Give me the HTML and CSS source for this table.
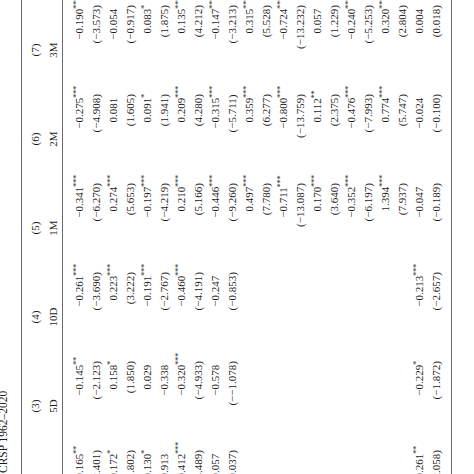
FILE: index.html
```html
<!DOCTYPE html>
<html>
<head>
<meta charset="utf-8">
<link rel="stylesheet" href="styles.css">
</head>
<body>
<div class="page">
  <div class="title">CRSP 1962–2020</div>
  <div class="tbl">
    <div class="hdr">
      <div class="row hrow"><div class="hc">(2)</div><div class="hc">(3)</div><div class="hc">(4)</div><div class="hc">(5)</div><div class="hc">(6)</div><div class="hc">(7)</div></div>
      <div class="row hrow"><div class="hc">1D</div><div class="hc">5D</div><div class="hc">10D</div><div class="hc">1M</div><div class="hc">2M</div><div class="hc">3M</div></div>
    </div>
    <div class="body">
      <div class="row">
        <div class="c"><span class="n">−0</span><span class="d">.165<sup>**</sup></span></div>
        <div class="c"><span class="n">−0</span><span class="d">.145<sup>**</sup></span></div>
        <div class="c"><span class="n">−0</span><span class="d">.261<sup>***</sup></span></div>
        <div class="c"><span class="n">−0</span><span class="d">.341<sup>***</sup></span></div>
        <div class="c"><span class="n">−0</span><span class="d">.275<sup>***</sup></span></div>
        <div class="c"><span class="n">−0</span><span class="d">.190<sup>***</sup></span></div>
      </div>
      <div class="row">
        <div class="c"><span class="n">(−2</span><span class="d">.401)</span></div>
        <div class="c"><span class="n">(−2</span><span class="d">.123)</span></div>
        <div class="c"><span class="n">(−3</span><span class="d">.690)</span></div>
        <div class="c"><span class="n">(−6</span><span class="d">.270)</span></div>
        <div class="c"><span class="n">(−4</span><span class="d">.908)</span></div>
        <div class="c"><span class="n">(−3</span><span class="d">.573)</span></div>
      </div>
      <div class="row">
        <div class="c"><span class="n">0</span><span class="d">.172<sup>*</sup></span></div>
        <div class="c"><span class="n">0</span><span class="d">.158<sup>*</sup></span></div>
        <div class="c"><span class="n">0</span><span class="d">.223<sup>***</sup></span></div>
        <div class="c"><span class="n">0</span><span class="d">.274<sup>***</sup></span></div>
        <div class="c"><span class="n">0</span><span class="d">.081</span></div>
        <div class="c"><span class="n">−0</span><span class="d">.054</span></div>
      </div>
      <div class="row">
        <div class="c"><span class="n">(1</span><span class="d">.802)</span></div>
        <div class="c"><span class="n">(1</span><span class="d">.850)</span></div>
        <div class="c"><span class="n">(3</span><span class="d">.222)</span></div>
        <div class="c"><span class="n">(5</span><span class="d">.653)</span></div>
        <div class="c"><span class="n">(1</span><span class="d">.605)</span></div>
        <div class="c"><span class="n">(−0</span><span class="d">.917)</span></div>
      </div>
      <div class="row">
        <div class="c"><span class="n">0</span><span class="d">.130<sup>*</sup></span></div>
        <div class="c"><span class="n">0</span><span class="d">.029</span></div>
        <div class="c"><span class="n">−0</span><span class="d">.191<sup>***</sup></span></div>
        <div class="c"><span class="n">−0</span><span class="d">.197<sup>***</sup></span></div>
        <div class="c"><span class="n">0</span><span class="d">.091<sup>*</sup></span></div>
        <div class="c"><span class="n">0</span><span class="d">.083<sup>*</sup></span></div>
      </div>
      <div class="row">
        <div class="c"><span class="n">−0</span><span class="d">.913</span></div>
        <div class="c"><span class="n">−0</span><span class="d">.338</span></div>
        <div class="c"><span class="n">(−2</span><span class="d">.767)</span></div>
        <div class="c"><span class="n">(−4</span><span class="d">.219)</span></div>
        <div class="c"><span class="n">(1</span><span class="d">.941)</span></div>
        <div class="c"><span class="n">(1</span><span class="d">.875)</span></div>
      </div>
      <div class="row">
        <div class="c"><span class="n">−0</span><span class="d">.412<sup>***</sup></span></div>
        <div class="c"><span class="n">−0</span><span class="d">.320<sup>***</sup></span></div>
        <div class="c"><span class="n">−0</span><span class="d">.460<sup>***</sup></span></div>
        <div class="c"><span class="n">0</span><span class="d">.210<sup>***</sup></span></div>
        <div class="c"><span class="n">0</span><span class="d">.209<sup>***</sup></span></div>
        <div class="c"><span class="n">0</span><span class="d">.135<sup>***</sup></span></div>
      </div>
      <div class="row">
        <div class="c"><span class="n">(−4</span><span class="d">.489)</span></div>
        <div class="c"><span class="n">(−4</span><span class="d">.933)</span></div>
        <div class="c"><span class="n">(−4</span><span class="d">.191)</span></div>
        <div class="c"><span class="n">(5</span><span class="d">.166)</span></div>
        <div class="c"><span class="n">(4</span><span class="d">.280)</span></div>
        <div class="c"><span class="n">(4</span><span class="d">.212)</span></div>
      </div>
      <div class="row">
        <div class="c"><span class="n">−0</span><span class="d">.057</span></div>
        <div class="c"><span class="n">−0</span><span class="d">.578</span></div>
        <div class="c"><span class="n">−0</span><span class="d">.247</span></div>
        <div class="c"><span class="n">−0</span><span class="d">.446<sup>***</sup></span></div>
        <div class="c"><span class="n">−0</span><span class="d">.315<sup>***</sup></span></div>
        <div class="c"><span class="n">−0</span><span class="d">.147<sup>***</sup></span></div>
      </div>
      <div class="row">
        <div class="c"><span class="n">(−0</span><span class="d">.037)</span></div>
        <div class="c"><span class="n">(−−1</span><span class="d">.078)</span></div>
        <div class="c"><span class="n">(−0</span><span class="d">.853)</span></div>
        <div class="c"><span class="n">(−9</span><span class="d">.260)</span></div>
        <div class="c"><span class="n">(−5</span><span class="d">.711)</span></div>
        <div class="c"><span class="n">(−3</span><span class="d">.213)</span></div>
      </div>
      <div class="row">
        <div class="c"></div><div class="c"></div><div class="c"></div>
        <div class="c"><span class="n">0</span><span class="d">.497<sup>***</sup></span></div>
        <div class="c"><span class="n">0</span><span class="d">.359<sup>***</sup></span></div>
        <div class="c"><span class="n">0</span><span class="d">.315<sup>***</sup></span></div>
      </div>
      <div class="row">
        <div class="c"></div><div class="c"></div><div class="c"></div>
        <div class="c"><span class="n">(7</span><span class="d">.780)</span></div>
        <div class="c"><span class="n">(6</span><span class="d">.277)</span></div>
        <div class="c"><span class="n">(5</span><span class="d">.528)</span></div>
      </div>
      <div class="row">
        <div class="c"></div><div class="c"></div><div class="c"></div>
        <div class="c"><span class="n">−0</span><span class="d">.711<sup>***</sup></span></div>
        <div class="c"><span class="n">−0</span><span class="d">.800<sup>***</sup></span></div>
        <div class="c"><span class="n">−0</span><span class="d">.724<sup>***</sup></span></div>
      </div>
      <div class="row">
        <div class="c"></div><div class="c"></div><div class="c"></div>
        <div class="c"><span class="n">(−13</span><span class="d">.087)</span></div>
        <div class="c"><span class="n">(−13</span><span class="d">.759)</span></div>
        <div class="c"><span class="n">(−13</span><span class="d">.232)</span></div>
      </div>
      <div class="row">
        <div class="c"></div><div class="c"></div><div class="c"></div>
        <div class="c"><span class="n">0</span><span class="d">.170<sup>***</sup></span></div>
        <div class="c"><span class="n">0</span><span class="d">.112<sup>**</sup></span></div>
        <div class="c"><span class="n">0</span><span class="d">.057</span></div>
      </div>
      <div class="row">
        <div class="c"></div><div class="c"></div><div class="c"></div>
        <div class="c"><span class="n">(3</span><span class="d">.640)</span></div>
        <div class="c"><span class="n">(2</span><span class="d">.375)</span></div>
        <div class="c"><span class="n">(1</span><span class="d">.229)</span></div>
      </div>
      <div class="row">
        <div class="c"></div><div class="c"></div><div class="c"></div>
        <div class="c"><span class="n">−0</span><span class="d">.352<sup>***</sup></span></div>
        <div class="c"><span class="n">−0</span><span class="d">.476<sup>***</sup></span></div>
        <div class="c"><span class="n">−0</span><span class="d">.240<sup>***</sup></span></div>
      </div>
      <div class="row">
        <div class="c"></div><div class="c"></div><div class="c"></div>
        <div class="c"><span class="n">(−6</span><span class="d">.197)</span></div>
        <div class="c"><span class="n">(−7</span><span class="d">.993)</span></div>
        <div class="c"><span class="n">(−5</span><span class="d">.253)</span></div>
      </div>
      <div class="row">
        <div class="c"></div><div class="c"></div><div class="c"></div>
        <div class="c"><span class="n">1</span><span class="d">.394<sup>***</sup></span></div>
        <div class="c"><span class="n">0</span><span class="d">.774<sup>***</sup></span></div>
        <div class="c"><span class="n">0</span><span class="d">.320<sup>***</sup></span></div>
      </div>
      <div class="row">
        <div class="c"></div><div class="c"></div><div class="c"></div>
        <div class="c"><span class="n">(7</span><span class="d">.937)</span></div>
        <div class="c"><span class="n">(5</span><span class="d">.747)</span></div>
        <div class="c"><span class="n">(2</span><span class="d">.804)</span></div>
      </div>
      <div class="row">
        <div class="c"><span class="n">−0</span><span class="d">.261<sup>**</sup></span></div>
        <div class="c"><span class="n">−0</span><span class="d">.229<sup>*</sup></span></div>
        <div class="c"><span class="n">−0</span><span class="d">.213<sup>***</sup></span></div>
        <div class="c"><span class="n">−0</span><span class="d">.047</span></div>
        <div class="c"><span class="n">−0</span><span class="d">.024</span></div>
        <div class="c"><span class="n">0</span><span class="d">.004</span></div>
      </div>
      <div class="row">
        <div class="c"><span class="n">(−2</span><span class="d">.058)</span></div>
        <div class="c"><span class="n">(−1</span><span class="d">.872)</span></div>
        <div class="c"><span class="n">(−2</span><span class="d">.657)</span></div>
        <div class="c"><span class="n">(−0</span><span class="d">.189)</span></div>
        <div class="c"><span class="n">(−0</span><span class="d">.100)</span></div>
        <div class="c"><span class="n">(0</span><span class="d">.018)</span></div>
      </div>
    </div>
  </div>
</div>
</body>
</html>
```

FILE: styles.css
```css
body {
  margin: 0;
  background: #ffffff;
}

.page {
  width: 474px;
  height: 474px;
  overflow: hidden;
  transform: rotate(-90deg);
  font-family: "Liberation Serif", "Times New Roman", serif;
  font-size: 11px;
  color: #1c1c1c;
  background: #ffffff;
}

.title {
  margin-top: -5px;
  height: 17px;
  line-height: 17px;
  padding-left: 1px;
  font-size: 11.5px;
  white-space: nowrap;
}

.tbl {
  margin-top: 9px;
  margin-left: -65.5px;
  width: 560px;
  border-top: 1px solid #6a6a6a;
  border-bottom: 1px solid #6a6a6a;
}

.hdr {
  padding-top: 4px;
  border-bottom: 1px solid #6a6a6a;
}

.row {
  display: flex;
  height: 17px;
  line-height: 17px;
  white-space: nowrap;
}

.hrow {
  height: 18px;
  line-height: 18px;
}

.hc {
  width: 89px;
  flex: none;
  text-align: center;
}

.body {
  padding-top: 8px;
  padding-bottom: 6px;
}

.c {
  width: 89px;
  flex: none;
  display: flex;
}

.n {
  width: 66.5px;
  flex: none;
  text-align: right;
}

.d {
  flex: none;
  text-align: left;
}

.d sup {
  font-size: 7.5px;
  line-height: 0;
  vertical-align: 4px;
  letter-spacing: 0.2px;
}
```
